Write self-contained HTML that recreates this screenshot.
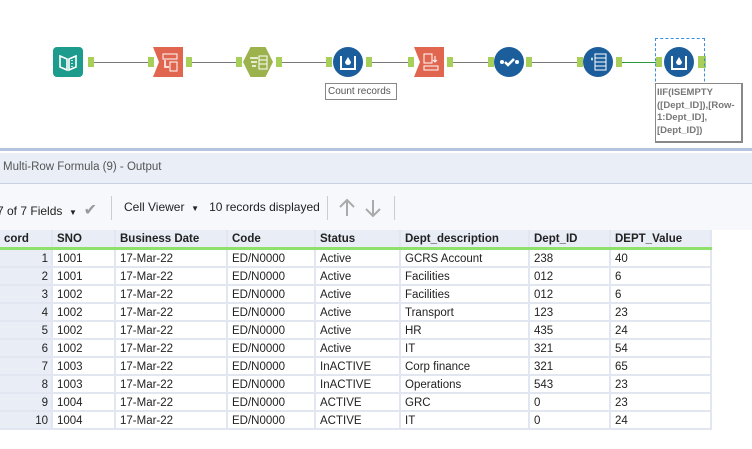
<!DOCTYPE html>
<html><head><style>
body{margin:0;width:752px;height:449px;overflow:hidden;background:#fff;font-family:"Liberation Sans",sans-serif;position:relative}
.a{position:absolute}
.ic{position:absolute;width:30px;height:30px;top:47px}
.an{position:absolute;width:6px;height:10px;background:#a9cf5b;top:57px}
.ln{position:absolute;height:1px;background:#777;top:62px}
table{position:absolute;left:0;top:230px;border-collapse:collapse;table-layout:fixed;width:711px;font-size:11.5px;color:#222}
tr{height:18px}
td{border:2px solid #e1e6f0;padding:2px 3px 0 4px;white-space:nowrap;overflow:hidden;background:#fff;line-height:14px}
tr.h td{font-weight:bold;background:#e8edf6;border-bottom:3px solid #8ee26c;border-top:none}
td.n{text-align:right;background:#e8edf6;border-left:none}
</style></head><body>
<div class="ln" style="left:92px;width:58px"></div>
<div class="ln" style="left:186px;width:54px"></div>
<div class="ln" style="left:276px;width:54px"></div>
<div class="ln" style="left:366px;width:46px"></div>
<div class="ln" style="left:448px;width:44px"></div>
<div class="ln" style="left:528px;width:54px"></div>
<div class="ln" style="left:618px;width:40px;background:#2a9a3a"></div>
<div class="an" style="left:88px"></div><div class="an" style="left:148px"></div>
<div class="an" style="left:186px"></div><div class="an" style="left:236px"></div>
<div class="an" style="left:276px"></div><div class="an" style="left:326px"></div>
<div class="an" style="left:366px"></div><div class="an" style="left:408px"></div>
<div class="an" style="left:447px"></div><div class="an" style="left:488px"></div>
<div class="an" style="left:526px"></div><div class="an" style="left:577px"></div>
<div class="an" style="left:616px"></div><div class="an" style="left:656px"></div>
<div class="an" style="left:698px;width:8px;height:12px;top:56px"></div>
<div class="ic" style="left:53px;background:#1d9b8c;border-radius:4px"><svg width="30" height="30"><path d="M7 9 L14 12 V23 L7 20Z M16 12 L23 9 V20 L16 23Z" fill="none" stroke="#fff" stroke-width="1.6"/><path d="M19 13v1M19 16v1M19 19v1" stroke="#fff" stroke-width="1.5"/></svg></div>
<div class="ic" style="left:153px;background:#e0664f;clip-path:polygon(0 0,100% 0,100% 100%,0 100%,20% 50%)"><svg width="30" height="30"><rect x="10" y="7" width="14" height="5" fill="none" stroke="#fff"/><rect x="17" y="15" width="7" height="9" fill="none" stroke="#fff"/><path d="M12 13 V20 H16" stroke="#fff" fill="none" stroke-width="1.5"/></svg></div>
<div class="ic" style="left:243px;background:#9cb34d;clip-path:polygon(25% 0,75% 0,100% 50%,75% 100%,25% 100%,0 50%)"><svg width="30" height="30"><path d="M7 11h8M8 15h6M9 19h4" stroke="#fff" stroke-width="1.5"/><rect x="16" y="9" width="8" height="13" fill="none" stroke="#fff"/><path d="M16 13h8M16 17h8" stroke="#fff"/></svg></div>
<div class="ic" style="left:333px;background:#1c5e9c;border-radius:50%"><svg width="30" height="30"><path d="M8 9v13h14V9" fill="none" stroke="#fff" stroke-width="2"/><path d="M15 10 l-3 5a3 3 0 0 0 6 0z" fill="#fff"/></svg></div>
<div class="ic" style="left:414px;background:#e0664f;clip-path:polygon(0 0,100% 0,100% 100%,0 100%,20% 50%)"><svg width="30" height="30"><rect x="10" y="7" width="8" height="9" fill="none" stroke="#fff"/><rect x="10" y="19" width="14" height="4" fill="none" stroke="#fff"/><path d="M21 9v6M19 13l2 2 2-2" stroke="#fff" fill="none"/></svg></div>
<div class="ic" style="left:494px;background:#1c5e9c;border-radius:50%"><svg width="30" height="30"><circle cx="8" cy="15" r="2" fill="#fff"/><circle cx="23" cy="15" r="2" fill="#fff"/><path d="M11 15l3 3 6-6" stroke="#fff" stroke-width="2.5" fill="none"/></svg></div>
<div class="ic" style="left:583px;background:#1c5e9c;border-radius:50%"><svg width="30" height="30"><rect x="12" y="7" width="11" height="16" fill="none" stroke="#fff"/><path d="M12 11h11M12 15h11M12 19h11" stroke="#fff"/><path d="M8 12l1-2 1 2-1 2z" fill="#fff"/></svg></div>
<div class="a" style="left:655px;top:38px;width:48px;height:78px;border:1px dashed #3b8ede;border-bottom:none"></div>
<div class="ic" style="left:664px;background:#1c5e9c;border-radius:50%"><svg width="30" height="30"><path d="M8 9v13h14V9" fill="none" stroke="#fff" stroke-width="2"/><path d="M15 10 l-3 5a3 3 0 0 0 6 0z" fill="#fff"/></svg></div>
<div class="a" style="left:325px;top:83px;width:68px;height:15px;border:1px solid #888;font-size:10px;color:#555;line-height:15px;padding-left:2px;background:#fff">Count records</div>
<div class="a" style="left:655px;top:83px;width:84px;height:54px;border:1px solid #888;border-right:2px solid #888;border-bottom:2px solid #888;font-size:9.5px;font-weight:bold;color:#777;line-height:12.5px;padding-left:1px;padding-top:3px;background:#fff">IIF(ISEMPTY<br>([Dept_ID]),[Row-<br>1:Dept_ID],<br>[Dept_ID])</div>
<div class="a" style="left:0;top:148px;width:752px;height:3px;background:#b4c4df"></div>
<div class="a" style="left:0;top:153px;width:752px;height:30px;background:#eaeef7;border-bottom:1px solid #c9d1e0"></div>
<div class="a" style="left:3px;top:161px;font-size:11.5px;color:#555">Multi-Row Formula (9) - Output</div>
<div class="a" style="left:0;top:184px;width:752px;height:46px;background:#f6f8fc"></div>
<div class="a" style="left:-3px;top:200px;font-size:12px;color:#222;white-space:nowrap">7 of 7 Fields &nbsp;<span style="font-size:8px">▼</span>&nbsp; <span style="color:#999;font-size:16px">✔</span></div>
<div class="a" style="left:111px;top:196px;width:1px;height:24px;background:#ccc"></div>
<div class="a" style="left:124px;top:200px;font-size:12px;color:#222;white-space:nowrap">Cell Viewer &nbsp;<span style="font-size:8px">▼</span>&nbsp;&nbsp; 10 records displayed</div>
<div class="a" style="left:327px;top:196px;width:1px;height:24px;background:#ccc"></div>
<div class="a" style="left:337px;top:196px"><svg width="50" height="24"><path d="M10 4v16M3 11l7-7 7 7M36 4v16M29 13l7 7 7-7" stroke="#aaa" stroke-width="2" fill="none"/></svg></div>
<div class="a" style="left:394px;top:196px;width:1px;height:24px;background:#ccc"></div>
<table>
<colgroup><col style="width:52px"><col style="width:63px"><col style="width:112px"><col style="width:88px"><col style="width:85px"><col style="width:129px"><col style="width:81px"><col style="width:101px"></colgroup>
<tr class="h"><td style="border-left:none">cord</td><td>SNO</td><td>Business Date</td><td>Code</td><td>Status</td><td>Dept_description</td><td>Dept_ID</td><td>DEPT_Value</td></tr>
<tr><td class="n">1</td><td>1001</td><td>17-Mar-22</td><td>ED/N0000</td><td>Active</td><td>GCRS Account</td><td>238</td><td>40</td></tr>
<tr><td class="n">2</td><td>1001</td><td>17-Mar-22</td><td>ED/N0000</td><td>Active</td><td>Facilities</td><td>012</td><td>6</td></tr>
<tr><td class="n">3</td><td>1002</td><td>17-Mar-22</td><td>ED/N0000</td><td>Active</td><td>Facilities</td><td>012</td><td>6</td></tr>
<tr><td class="n">4</td><td>1002</td><td>17-Mar-22</td><td>ED/N0000</td><td>Active</td><td>Transport</td><td>123</td><td>23</td></tr>
<tr><td class="n">5</td><td>1002</td><td>17-Mar-22</td><td>ED/N0000</td><td>Active</td><td>HR</td><td>435</td><td>24</td></tr>
<tr><td class="n">6</td><td>1002</td><td>17-Mar-22</td><td>ED/N0000</td><td>Active</td><td>IT</td><td>321</td><td>54</td></tr>
<tr><td class="n">7</td><td>1003</td><td>17-Mar-22</td><td>ED/N0000</td><td>InACTIVE</td><td>Corp finance</td><td>321</td><td>65</td></tr>
<tr><td class="n">8</td><td>1003</td><td>17-Mar-22</td><td>ED/N0000</td><td>InACTIVE</td><td>Operations</td><td>543</td><td>23</td></tr>
<tr><td class="n">9</td><td>1004</td><td>17-Mar-22</td><td>ED/N0000</td><td>ACTIVE</td><td>GRC</td><td>0</td><td>23</td></tr>
<tr><td class="n">10</td><td>1004</td><td>17-Mar-22</td><td>ED/N0000</td><td>ACTIVE</td><td>IT</td><td>0</td><td>24</td></tr>
</table>
</body></html>
